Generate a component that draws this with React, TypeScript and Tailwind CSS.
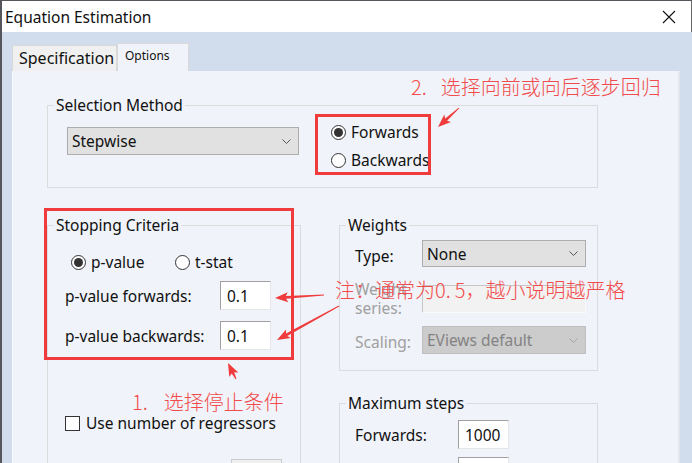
import React from 'react';

type Pt = [number, number];

// tapered arrow with a swept-back head, drawn from tail to tip
const arrowPoints = (tail: Pt, tip: Pt) => {
  const [x1, y1] = tail;
  const [x2, y2] = tip;
  const len = Math.hypot(x2 - x1, y2 - y1);
  const ux = (x2 - x1) / len;
  const uy = (y2 - y1) / len;
  const px = -uy;
  const py = ux;
  const head = 11;
  const bx = x2 - ux * head;
  const by = y2 - uy * head;
  const pts: Pt[] = [
    [x1 + px * 0.4, y1 + py * 0.4],
    [bx + px * 1.4, by + py * 1.4],
    [bx - ux * 2 + px * 5, by - uy * 2 + py * 5],
    [x2, y2],
    [bx - ux * 2 - px * 5, by - uy * 2 - py * 5],
    [bx - px * 1.4, by - py * 1.4],
    [x1 - px * 0.4, y1 - py * 0.4],
  ];
  return pts.map(p => p.map(n => n.toFixed(1)).join(',')).join(' ');
};

const arrows: [Pt, Pt][] = [
  [[457, 107], [436, 126]],
  [[322, 294], [273, 297]],
  [[337, 305], [275, 339]],
  [[234, 378], [226, 362]],
];

const Chevron = ({ muted }: { muted?: boolean }) => (
  <svg width="9" height="5" viewBox="0 0 9 5" className="shrink-0">
    <path d="M0.5 0.5 L4.5 4.5 L8.5 0.5" fill="none" stroke={muted ? '#a3a3a3' : '#555'} strokeWidth="1" />
  </svg>
);

const Dropdown = ({ value, width, disabled }: { value: string; width: string; disabled?: boolean }) => (
  <div
    className={`${width} flex items-center justify-between pl-[4px] pr-[7px] border ${
      disabled ? 'bg-[#cccccc] border-[#bfbfbf] text-[#838383]' : 'bg-[#e1e1e1] border-[#adadad]'
    }`}
  >
    <span>{value}</span>
    <Chevron muted={disabled} />
  </div>
);

const TextField = ({ value, className }: { value?: string; className: string }) => (
  <div className={`${className} bg-white border-t border-l border-[#a0a0a0] border-r border-b border-r-[#e6e6e6] border-b-[#e6e6e6] pl-[6px] flex items-center`}>
    {value}
  </div>
);

const Radio = ({ checked, label }: { checked?: boolean; label: string }) => (
  <div className="flex items-center gap-[5px]">
    <span className="w-[15px] h-[15px] rounded-full border border-[#333] bg-white flex items-center justify-center">
      {checked && <span className="w-[9px] h-[9px] rounded-full bg-[#333]" />}
    </span>
    <span>{label}</span>
  </div>
);

const Group = ({ title, className, children }: { title: string; className: string; children: React.ReactNode }) => (
  <fieldset className={`${className} border border-[#dcdcdc]`}>
    <legend className="ml-[6px] px-[2px] leading-[20px]">{title}</legend>
    {children}
  </fieldset>
);

export default function App() {
  return (
    <div className="relative w-[692px] h-[463px] overflow-hidden bg-[#d1dcec] border-l-2 border-t border-[#55565c] font-['Noto_Sans',sans-serif] text-[15.5px] leading-[20px] text-[#111]">
      {/* title bar */}
      <div className="h-[31px] bg-white flex items-center justify-between pl-[3px] pr-[15px] border-r border-[#6a6a6a]">
        <span>Equation Estimation</span>
        <svg width="14" height="14" viewBox="0 0 14 14">
          <path d="M1 1 L13 13 M13 1 L1 13" stroke="#111" strokeWidth="1.1" />
        </svg>
      </div>

      <div className="pl-[10px] pt-[11px] pr-[12px]">
        {/* tabs */}
        <div className="flex items-end h-[28px]">
          <div className="w-[105px] h-[26px] bg-[#f0f0f0] border border-b-0 border-[#d9d9d9] pl-[6px] pt-[2px] text-[16px]">
            Specification
          </div>
          <div className="w-[72px] h-[28px] bg-[#f0f3f9] border border-b-0 border-[#d9d9d9] pl-[7px] pt-[2px] text-[12px]">
            Options
          </div>
        </div>

        {/* page */}
        <div className="h-[400px] bg-[#f0f3f9] border-l border-t border-r-2 border-l-[#f8f9fb] border-t-[#f0f3f9] border-r-[#e3e6ea] pl-[34px] pt-[23px]">
          <Group title="Selection Method" className="w-[551px] h-[93px]">
            <div className="flex items-start pl-[19px] pt-[3px]">
              <Dropdown value="Stepwise" width="w-[232px] h-[28px] mt-[9px]" />
              <div className="ml-[32px] flex flex-col">
                <div className="h-[28px] flex items-center"><Radio checked label="Forwards" /></div>
                <div className="h-[28px] flex items-center"><Radio label="Backwards" /></div>
              </div>
            </div>
          </Group>

          <div className="flex gap-[38px] mt-[27px]">
            <Group title="Stopping Criteria" className="w-[254px] h-[300px] shrink-0">
              <div className="flex items-center h-[20px] mt-[17px] pl-[23px]">
                <div className="w-[104px]"><Radio checked label="p-value" /></div>
                <Radio label="t-stat" />
              </div>
              <div className="flex items-center mt-[9px] pl-[17px]">
                <span className="w-[155px]">p-value forwards:</span>
                <TextField value="0.1" className="w-[51px] h-[29px]" />
              </div>
              <div className="flex items-center mt-[11px] pl-[17px]">
                <span className="w-[155px]">p-value backwards:</span>
                <TextField value="0.1" className="w-[51px] h-[29px]" />
              </div>
              <div className="flex items-center gap-[6px] mt-[63px] pl-[17px]">
                <span className="w-[15px] h-[15px] border border-[#333] bg-white" />
                <span>Use number of regressors</span>
              </div>
              <div className="flex items-start mt-[26px] pl-[14px] text-[#a0a0a0]">
                <span className="w-[169px] pt-[2px]">Number of regressors</span>
                <div className="w-[51px] h-[29px] bg-[#f0f0f0] border border-[#cccccc]" />
              </div>
            </Group>

            <div className="flex flex-col">
              <Group title="Weights" className="w-[259px] h-[156px]">
                <div className="flex items-center mt-[5px] pl-[15px]">
                  <span className="w-[67px] pt-[4px]">Type:</span>
                  <Dropdown value="None" width="w-[164px] h-[27px]" />
                </div>
                <div className="flex items-center mt-[13px] pl-[15px] text-[#a0a0a0]">
                  <span className="w-[67px] leading-[19px]">Weight<br />series:</span>
                  <div className="w-[164px] h-[28px] bg-[#f2f2f2] border border-[#c6c6c6] border-r-[#fafafa] border-b-[#fafafa]" />
                </div>
                <div className="flex items-center mt-[8px] pl-[15px]">
                  <span className="w-[67px] pt-[3px] text-[#a0a0a0]">Scaling:</span>
                  <Dropdown value="EViews default" width="w-[164px] h-[28px]" disabled />
                </div>
              </Group>

              <Group title="Maximum steps" className="w-[259px] h-[200px] mt-[22px]">
                <div className="flex items-center mt-[7px] pl-[15px]">
                  <span className="w-[103px]">Forwards:</span>
                  <TextField value="1000" className="w-[51px] h-[29px]" />
                </div>
                <div className="flex items-center mt-[8px] pl-[15px]">
                  <span className="w-[103px]">Backwards:</span>
                  <TextField value="1000" className="w-[51px] h-[29px]" />
                </div>
              </Group>
            </div>
          </div>
        </div>
      </div>

      {/* red annotations laid over the dialog */}
      <div className="absolute left-[313px] top-[113px] w-[116px] h-[61px] border-[3px] border-[#ef3b3b]" />
      <div className="absolute left-[42px] top-[207px] w-[250px] h-[152px] border-[3px] border-[#ef3b3b]" />
      <svg className="absolute left-0 top-0 pointer-events-none" width="692" height="463">
        {arrows.map(([a, b], i) => (
          <polygon key={i} points={arrowPoints(a, b)} fill="#ef3b3b" />
        ))}
      </svg>
      <div className="absolute left-[409px] top-[75px] text-[20px] leading-[22px] text-[#f24b4b] font-light font-['Noto_Sans_CJK_SC',sans-serif] whitespace-nowrap">
        2.<span className="ml-[14px]">选择向前或向后逐步回归</span>
      </div>
      <div className="absolute left-[333px] top-[278px] text-[20px] leading-[22px] text-[#f24b4b] font-light font-['Noto_Sans_CJK_SC',sans-serif] whitespace-nowrap">
        注：通常为0.<span className="pl-[4px]">5</span>，越小说明越严格
      </div>
      <div className="absolute left-[130px] top-[390px] text-[20px] leading-[22px] text-[#f24b4b] font-light font-['Noto_Sans_CJK_SC',sans-serif] whitespace-nowrap">
        1.<span className="ml-[16px]">选择停止条件</span>
      </div>
    </div>
  );
}
